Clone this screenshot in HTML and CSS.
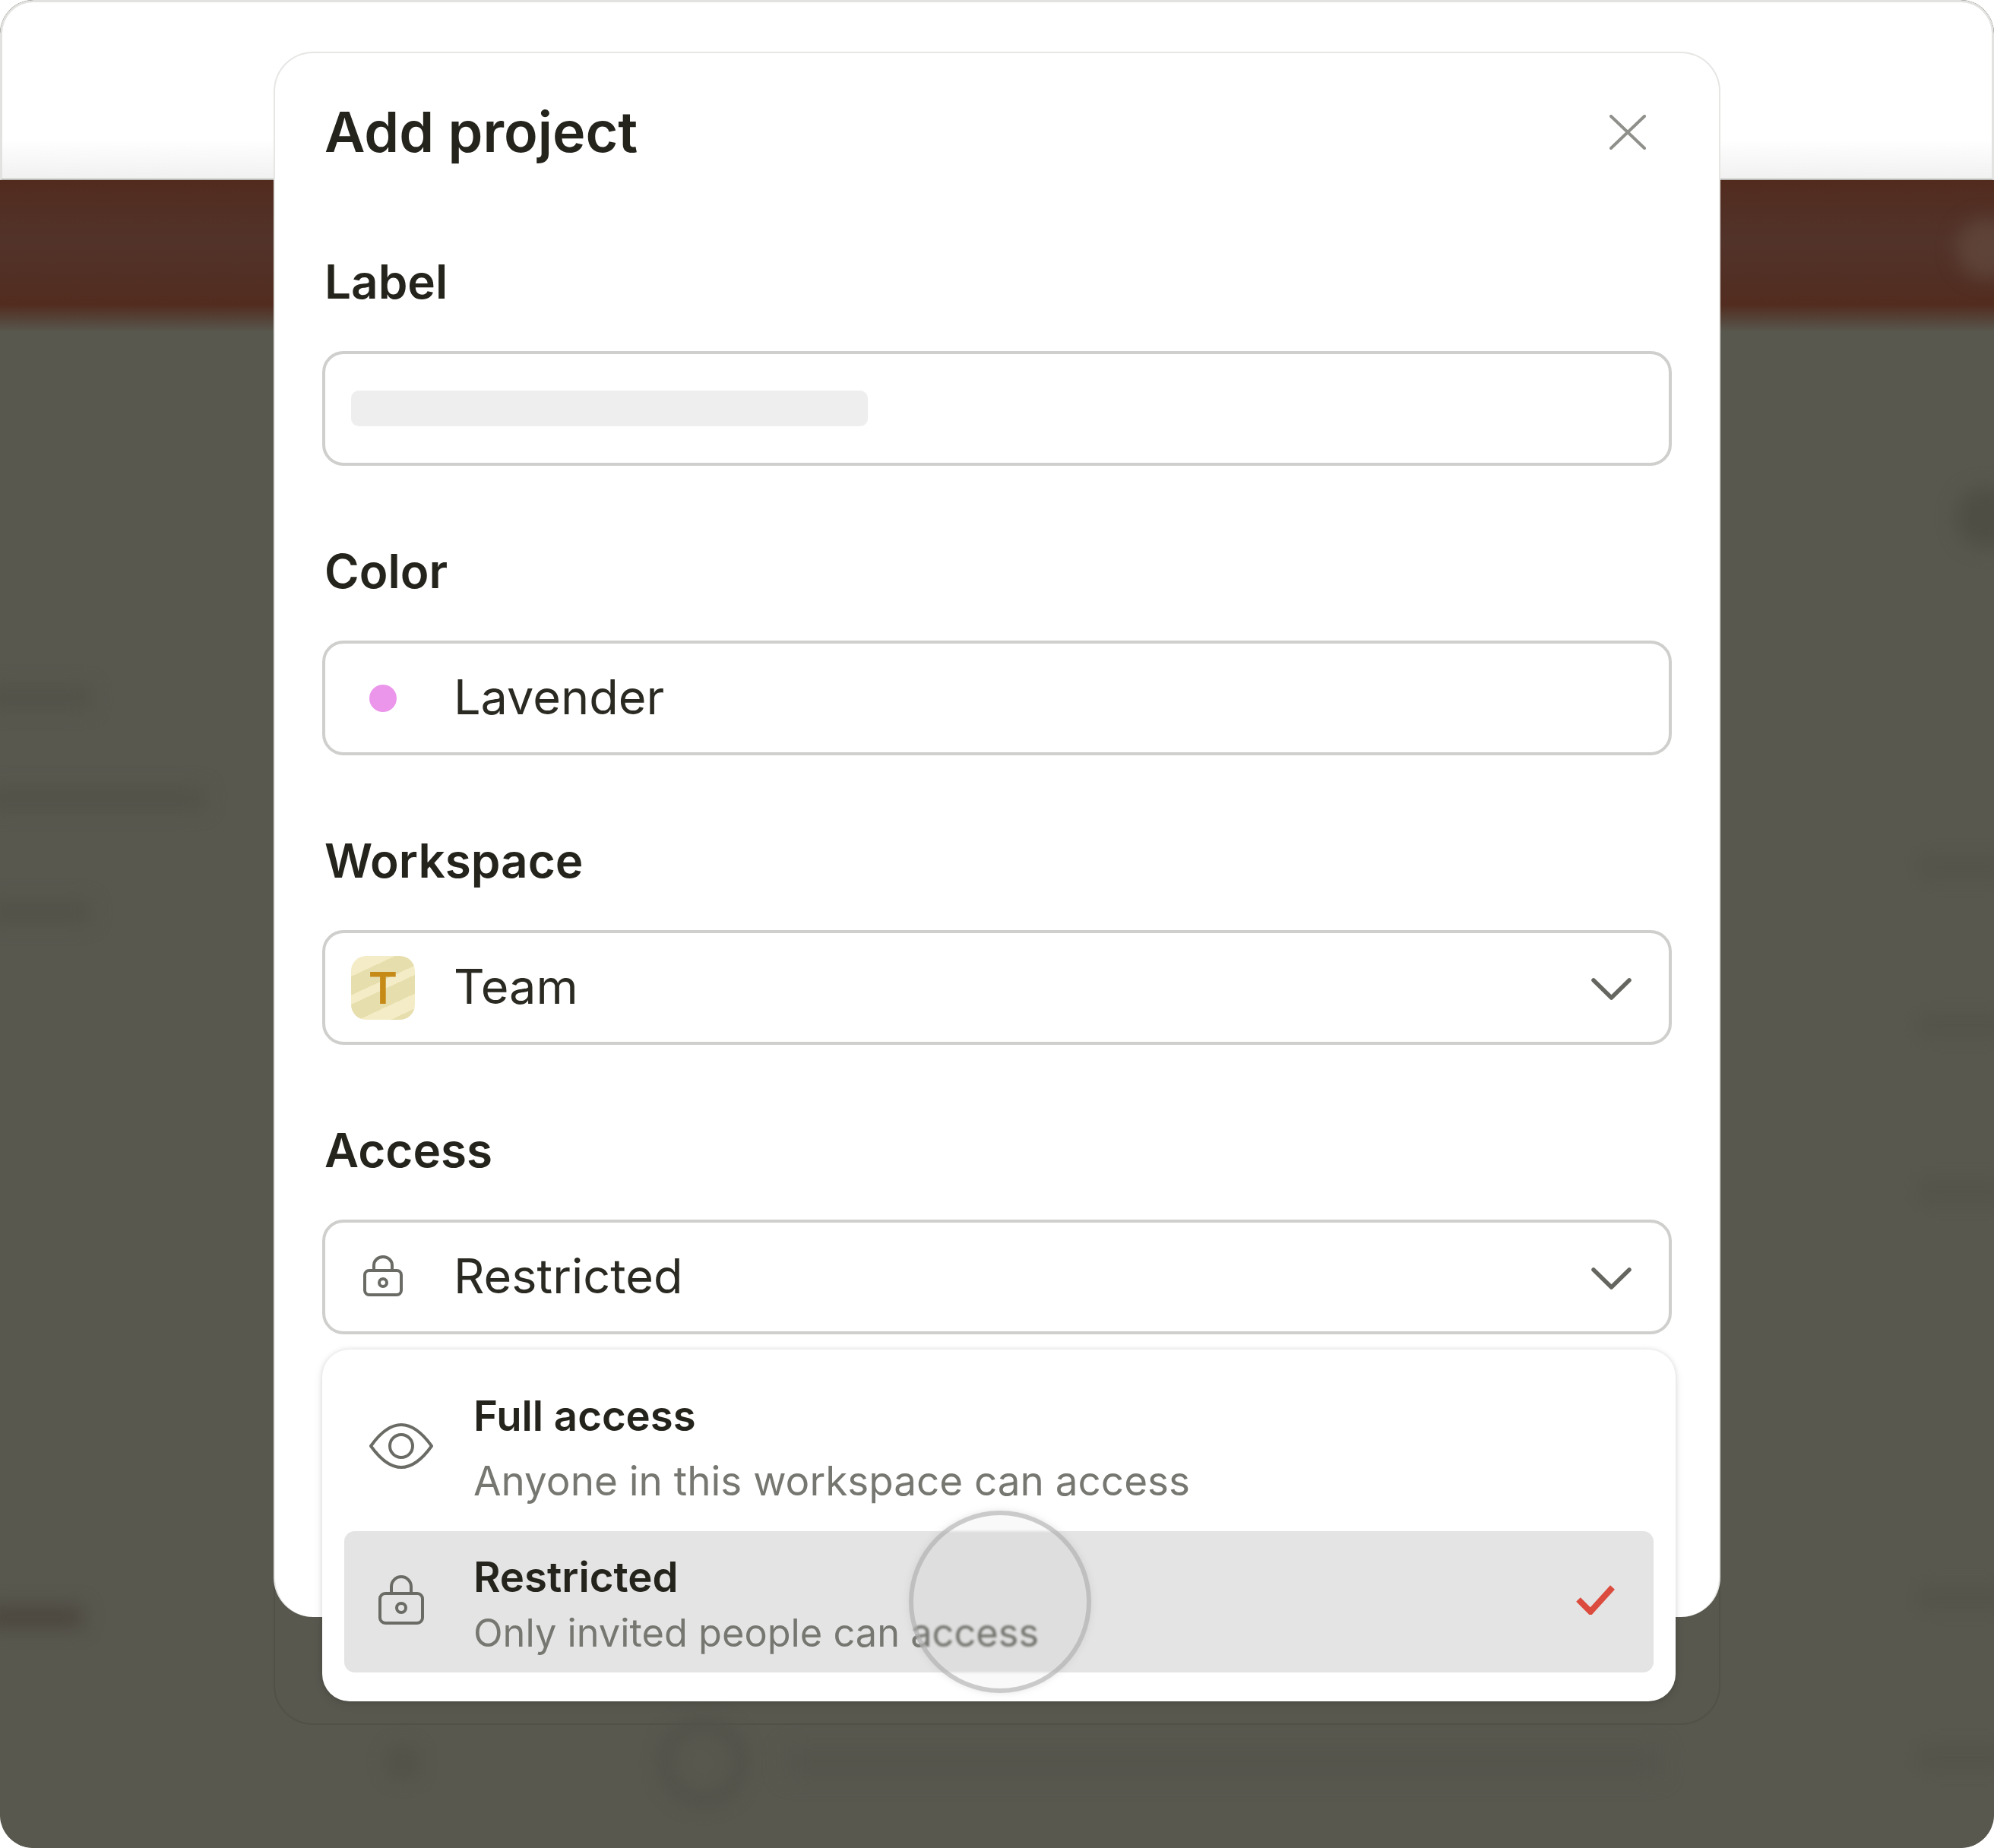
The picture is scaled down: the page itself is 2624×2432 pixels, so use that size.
FILE: index.html
```html
<!DOCTYPE html>
<html lang="en">
<head>
  <meta charset="UTF-8">
  <title>Add project</title>
  <link rel="stylesheet" href="styles.css">
</head>
<body>
  <div class="window">
    <div class="topbar"></div>
    <div class="banner">
      <span class="blur-dot banner-dot"></span>
    </div>
    <div class="content">
      <div class="blur-list blur-left">
        <span class="blur-bar"></span>
        <span class="blur-bar"></span>
        <span class="blur-bar"></span>
        <span class="blur-bar"></span>
      </div>
      <div class="blur-list blur-right">
        <span class="blur-bar"></span>
        <span class="blur-bar"></span>
        <span class="blur-bar"></span>
        <span class="blur-bar"></span>
        <span class="blur-bar"></span>
      </div>
      <span class="blur-dot content-dot"></span>
      <div class="ghost-card"></div>
      <div class="composer">
        <span class="composer-small"></span>
        <span class="composer-circle"></span>
        <span class="composer-line"></span>
      </div>
    </div>

    <div class="overlay">
      <div class="modal">
        <div class="modal-head">
          <div class="modal-title">Add project</div>
          <svg class="close-icon" viewBox="0 0 48 46" fill="none" stroke="#8f8f8b" stroke-width="4" stroke-linecap="round">
            <path d="M2 2l44 42M46 2L2 44"/>
          </svg>
        </div>

        <div class="form-group">
          <div class="field-label">Label</div>
          <div class="field">
            <div class="field-skeleton"></div>
          </div>
        </div>

        <div class="form-group">
          <div class="field-label">Color</div>
          <div class="field">
            <div class="field-icon"><span class="color-dot"></span></div>
            <div class="field-value">Lavender</div>
          </div>
        </div>

        <div class="form-group">
          <div class="field-label">Workspace</div>
          <div class="field">
            <div class="field-icon"><span class="team-tile">T</span></div>
            <div class="field-value">Team</div>
            <svg class="chevron" viewBox="0 0 53 29" fill="none" stroke="#666660" stroke-width="5.500" stroke-linecap="round" stroke-linejoin="round">
              <path d="M3 3L26.500 26L50 3"/>
            </svg>
          </div>
        </div>

        <div class="form-group">
          <div class="field-label">Access</div>
          <div class="field field-access">
            <div class="field-icon">
              <svg class="lock-icon" viewBox="0 0 52 54" fill="none" stroke="#6b6b66" stroke-width="4">
                <rect x="2" y="20" width="48" height="32" rx="6"/>
                <path d="M14 20v-7a12 11 0 0 1 24 0v7"/>
                <circle cx="26" cy="36" r="5"/>
              </svg>
            </div>
            <div class="field-value">Restricted</div>
            <svg class="chevron" viewBox="0 0 53 29" fill="none" stroke="#666660" stroke-width="5.500" stroke-linecap="round" stroke-linejoin="round">
              <path d="M3 3L26.500 26L50 3"/>
            </svg>

            <div class="dropdown">
              <div class="option option-full">
                <div class="option-icon">
                  <svg class="eye-icon" viewBox="0 0 84 60" fill="none" stroke="#6b6b66" stroke-width="4" stroke-linejoin="round">
                    <path d="M2 30C12 16 26 2 42 2s30 14 40 28C72 44 58 58 42 58S12 44 2 30z"/>
                    <circle cx="42" cy="30" r="15"/>
                  </svg>
                </div>
                <div class="option-text">
                  <div class="option-title">Full access</div>
                  <div class="option-sub">Anyone in this workspace can access</div>
                </div>
              </div>
              <div class="option option-selected">
                <div class="option-icon">
                  <svg class="lock-large" viewBox="0 0 60 66" fill="none" stroke="#6b6b66" stroke-width="4">
                    <rect x="2" y="25" width="56" height="39" rx="7"/>
                    <path d="M17 25v-9a13 13 0 0 1 26 0v9"/>
                    <circle cx="30" cy="44" r="6"/>
                  </svg>
                </div>
                <div class="option-text">
                  <div class="option-title">Restricted</div>
                  <div class="option-sub">Only invited people can access</div>
                </div>
                <svg class="check-icon" viewBox="0 0 51 39" fill="none" stroke="#dc4c3e" stroke-width="8">
                  <path d="M3 19l16 16L48 3"/>
                </svg>
              </div>
              <div class="touch-circle"></div>
            </div>
          </div>
        </div>
      </div>
    </div>
  </div>
</body>
</html>
```

FILE: styles.css
```css
* {
  box-sizing: border-box;
}
body {
  margin: 0;
  background: #ffffff;
  font-family: Inter, "Liberation Sans", sans-serif;
  color: #25241c;
}

.window {
  position: relative;
  width: 2624px;
  height: 2432px;
  border-radius: 44px;
  overflow: hidden;
  display: flex;
  flex-direction: column;
  background: #58584f;
}

/* page behind the modal */
.topbar {
  height: 237px;
  flex-shrink: 0;
  background: linear-gradient(180deg, #ffffff 0, #ffffff 180px, #f1f1f1 100%);
  border: 3px solid #e2e2e0;
  border-bottom: 2px solid #b8b8b4;
  border-radius: 44px 44px 0 0;
}
.banner {
  position: relative;
  height: 200px;
  flex-shrink: 0;
  background: linear-gradient(180deg, #522b1e 0, #52332a 40%, #522c1f 82%, #58584f 100%);
}
.content {
  position: relative;
  flex: 1;
  display: flex;
  justify-content: space-between;
  background: #58584f;
}

.blur-list {
  display: flex;
  flex-direction: column;
}
.blur-bar {
  display: block;
  height: 30px;
  border-radius: 8px;
  background: #525249;
  filter: blur(12px);
}
.blur-left {
  margin-left: -20px;
}
.blur-left .blur-bar:nth-child(1) { width: 140px; margin-top: 466px; }
.blur-left .blur-bar:nth-child(2) { width: 290px; margin-top: 103px; }
.blur-left .blur-bar:nth-child(3) { width: 140px; margin-top: 119px; }
.blur-left .blur-bar:nth-child(4) { width: 130px; margin-top: 898px; background: #4c473f; }
.blur-right {
  margin-right: -20px;
}
.blur-right .blur-bar { width: 120px; opacity: 0.7; }
.blur-right .blur-bar:nth-child(1) { margin-top: 689px; }
.blur-right .blur-bar:nth-child(2) { margin-top: 179px; }
.blur-right .blur-bar:nth-child(3) { margin-top: 188px; }
.blur-right .blur-bar:nth-child(4) { margin-top: 505px; }
.blur-right .blur-bar:nth-child(5) { margin-top: 180px; }

.blur-dot {
  position: absolute;
  width: 80px;
  height: 80px;
  border-radius: 50%;
  filter: blur(12px);
}
.banner-dot {
  top: 50px;
  right: -30px;
  background: #5e4338;
}
.content-dot {
  top: 204px;
  right: -30px;
  background: #4e4e45;
}

.ghost-card {
  position: absolute;
  left: 360px;
  top: 1400px;
  width: 1904px;
  height: 433px;
  border: 2px solid #515148;
  border-radius: 52px;
}
.composer {
  position: absolute;
  left: 505px;
  top: 1822px;
  width: 1680px;
  display: flex;
  align-items: center;
}
.composer-small {
  width: 50px;
  height: 50px;
  border-radius: 50%;
  background: #53534a;
  filter: blur(10px);
}
.composer-circle {
  width: 120px;
  height: 120px;
  margin-left: 310px;
  border-radius: 50%;
  border: 20px solid #52524a;
  filter: blur(10px);
}
.composer-line {
  flex: 1;
  height: 36px;
  margin-left: 50px;
  background: #54544c;
  filter: blur(14px);
}

/* modal */
.overlay {
  position: absolute;
  top: 68px;
  left: 360px;
}
.modal {
  width: 1904px;
  height: 2060px;
  padding: 62px 62px 0 62px;
  background: #ffffff;
  border: 2px solid #e6e6e4;
  border-bottom: none;
  border-radius: 52px;
}
.modal-head {
  display: flex;
  justify-content: space-between;
  align-items: center;
  height: 84px;
  margin-bottom: 120px;
}
.modal-title {
  padding-left: 3px;
  font-size: 73.5px;
  font-weight: 600;
  line-height: 84px;
}
.close-icon {
  width: 48px;
  height: 46px;
  margin-right: 34px;
}

.form-group {
  margin-bottom: 104px;
}
.field-label {
  padding-left: 3px;
  margin-bottom: 56px;
  font-size: 62px;
  font-weight: 600;
  line-height: 70px;
}
.field {
  position: relative;
  display: flex;
  align-items: center;
  width: 1776px;
  height: 151px;
  padding: 0 49px 0 34px;
  background: #ffffff;
  border: 4px solid #cfcfcd;
  border-radius: 28px;
}
.field-skeleton {
  width: 680px;
  height: 47px;
  border-radius: 10px;
  background: #eeeeee;
}
.field-icon {
  display: flex;
  justify-content: center;
  align-items: center;
  width: 84px;
  margin-right: 51px;
  flex-shrink: 0;
}
.field-value {
  flex: 1;
  padding-bottom: 3px;
  font-size: 63px;
  line-height: 80px;
  color: #2a2a22;
}
.color-dot {
  width: 36px;
  height: 36px;
  border-radius: 50%;
  background: #eb96eb;
}
.team-tile {
  display: flex;
  justify-content: center;
  align-items: center;
  width: 84px;
  height: 84px;
  border-radius: 20px;
  background: linear-gradient(155deg, #f4ecc6 0 22%, #e7dead 22% 42%, #f4ecc6 42% 52%, #e7dead 52% 72%, #f4ecc6 72% 88%, #e7dead 88%);
  font-size: 58px;
  font-weight: 600;
  color: #c68a17;
}
.lock-icon {
  width: 52px;
  height: 54px;
  margin-bottom: 3px;
}
.chevron {
  width: 53px;
  height: 29px;
  margin-top: 3px;
  flex-shrink: 0;
}

/* access dropdown */
.dropdown {
  position: absolute;
  top: 167px;
  left: -4px;
  width: 1781px;
  height: 463px;
  padding: 0 29px;
  background: #ffffff;
  border-radius: 36px;
  box-shadow: 0 0 6px rgba(0, 0, 0, 0.12), 0 4px 14px rgba(0, 0, 0, 0.08);
}
.option {
  display: flex;
  align-items: center;
  padding-left: 25px;
  padding-right: 51px;
}
.option-full {
  height: 239px;
  padding-top: 20px;
}
.option-selected {
  height: 186px;
  border-radius: 14px;
  background: #e4e4e4;
}
.option-icon {
  display: flex;
  justify-content: center;
  width: 100px;
  margin-right: 45px;
  margin-bottom: 6px;
  flex-shrink: 0;
}
.option-text {
  flex: 1;
}
.option-title {
  font-size: 54.5px;
  font-weight: 600;
  line-height: 70px;
}
.option-sub {
  line-height: 70px;
  color: #777772;
}
.option-full .option-sub {
  margin-top: 16px;
  font-size: 53px;
}
.option-selected .option-text {
  padding-top: 8px;
}
.option-selected .option-sub {
  margin-top: 4px;
  font-size: 50.5px;
}
.eye-icon {
  width: 84px;
  height: 60px;
}
.lock-large {
  width: 60px;
  height: 66px;
}
.check-icon {
  width: 51px;
  height: 39px;
  margin-bottom: 6px;
  flex-shrink: 0;
}
.touch-circle {
  position: absolute;
  left: 772px;
  top: 212px;
  width: 240px;
  height: 240px;
  border-radius: 50%;
  border: 6px solid rgba(170, 170, 170, 0.6);
  background: rgba(0, 0, 0, 0.025);
  backdrop-filter: blur(1.5px);
  box-shadow: 0 0 8px rgba(170, 170, 170, 0.3);
}
```
